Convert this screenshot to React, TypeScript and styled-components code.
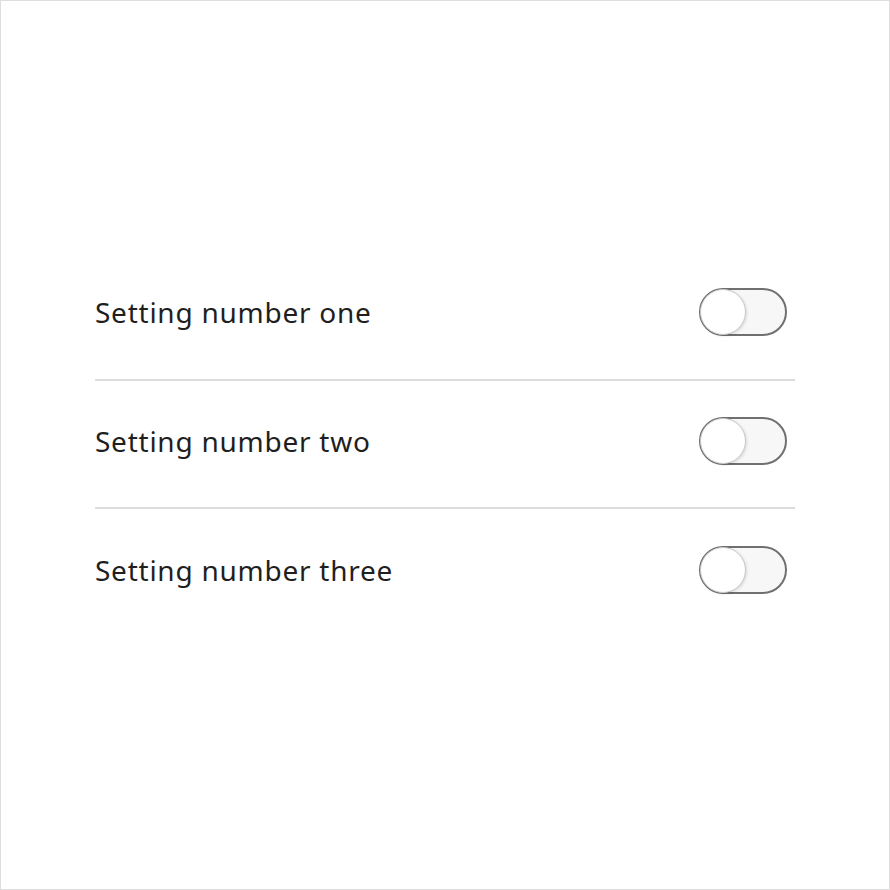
import { useState } from 'react';
import styled, { createGlobalStyle } from 'styled-components';

const GlobalStyle = createGlobalStyle`
  html, body {
    margin: 0;
    padding: 0;
    background: #ffffff;
  }
  * {
    box-sizing: border-box;
  }
`;

const settings = ['Setting number one', 'Setting number two', 'Setting number three'];

function Toggle({ on, onClick }) {
  return (
    <Track $on={on} onClick={onClick} role="switch" aria-checked={on}>
      <Knob $on={on} />
    </Track>
  );
}

export default function App() {
  const [values, setValues] = useState([false, false, false]);

  const flip = (i) => {
    setValues(values.map((v, j) => (j === i ? !v : v)));
  };

  return (
    <>
      <GlobalStyle />
      <Page>
        <List>
          {settings.map((label, i) => (
            <Row key={label}>
              <Label>{label}</Label>
              <Toggle on={values[i]} onClick={() => flip(i)} />
            </Row>
          ))}
        </List>
      </Page>
    </>
  );
}

const Page = styled.div`
  width: 890px;
  height: 890px;
  border: 1px solid #dedede;
  display: flex;
  align-items: center;
  justify-content: center;
  font-family: 'Noto Sans', 'Open Sans', sans-serif;
`;

const List = styled.ul`
  list-style: none;
  margin: 0;
  padding: 0;
  width: 700px;
`;

const Row = styled.li`
  display: flex;
  align-items: center;
  justify-content: space-between;
  height: 128.5px;
  padding: 0 8px 7px 0;
  border-bottom: 2px solid #dcdcdc;
  &:last-child {
    border-bottom: none;
  }
`;

const Label = styled.span`
  font-size: 28px;
  color: #1f1f1f;
  letter-spacing: 0.75px;
`;

const Track = styled.button`
  position: relative;
  width: 88px;
  height: 48px;
  padding: 0;
  border: 2px solid ${(p) => (p.$on ? '#3e91f7' : '#707070')};
  border-radius: 24px;
  background: ${(p) => (p.$on ? '#3e91f7' : '#f7f7f7')};
  cursor: pointer;
`;

const Knob = styled.span`
  position: absolute;
  top: -1px;
  left: ${(p) => (p.$on ? '40px' : '-1px')};
  width: 46px;
  height: 46px;
  border-radius: 50%;
  background: #ffffff;
  border: 1px solid #c8c8c8;
  box-shadow: 1px 1px 3px rgba(0, 0, 0, 0.12);
  transition: left 0.2s ease;
`;
